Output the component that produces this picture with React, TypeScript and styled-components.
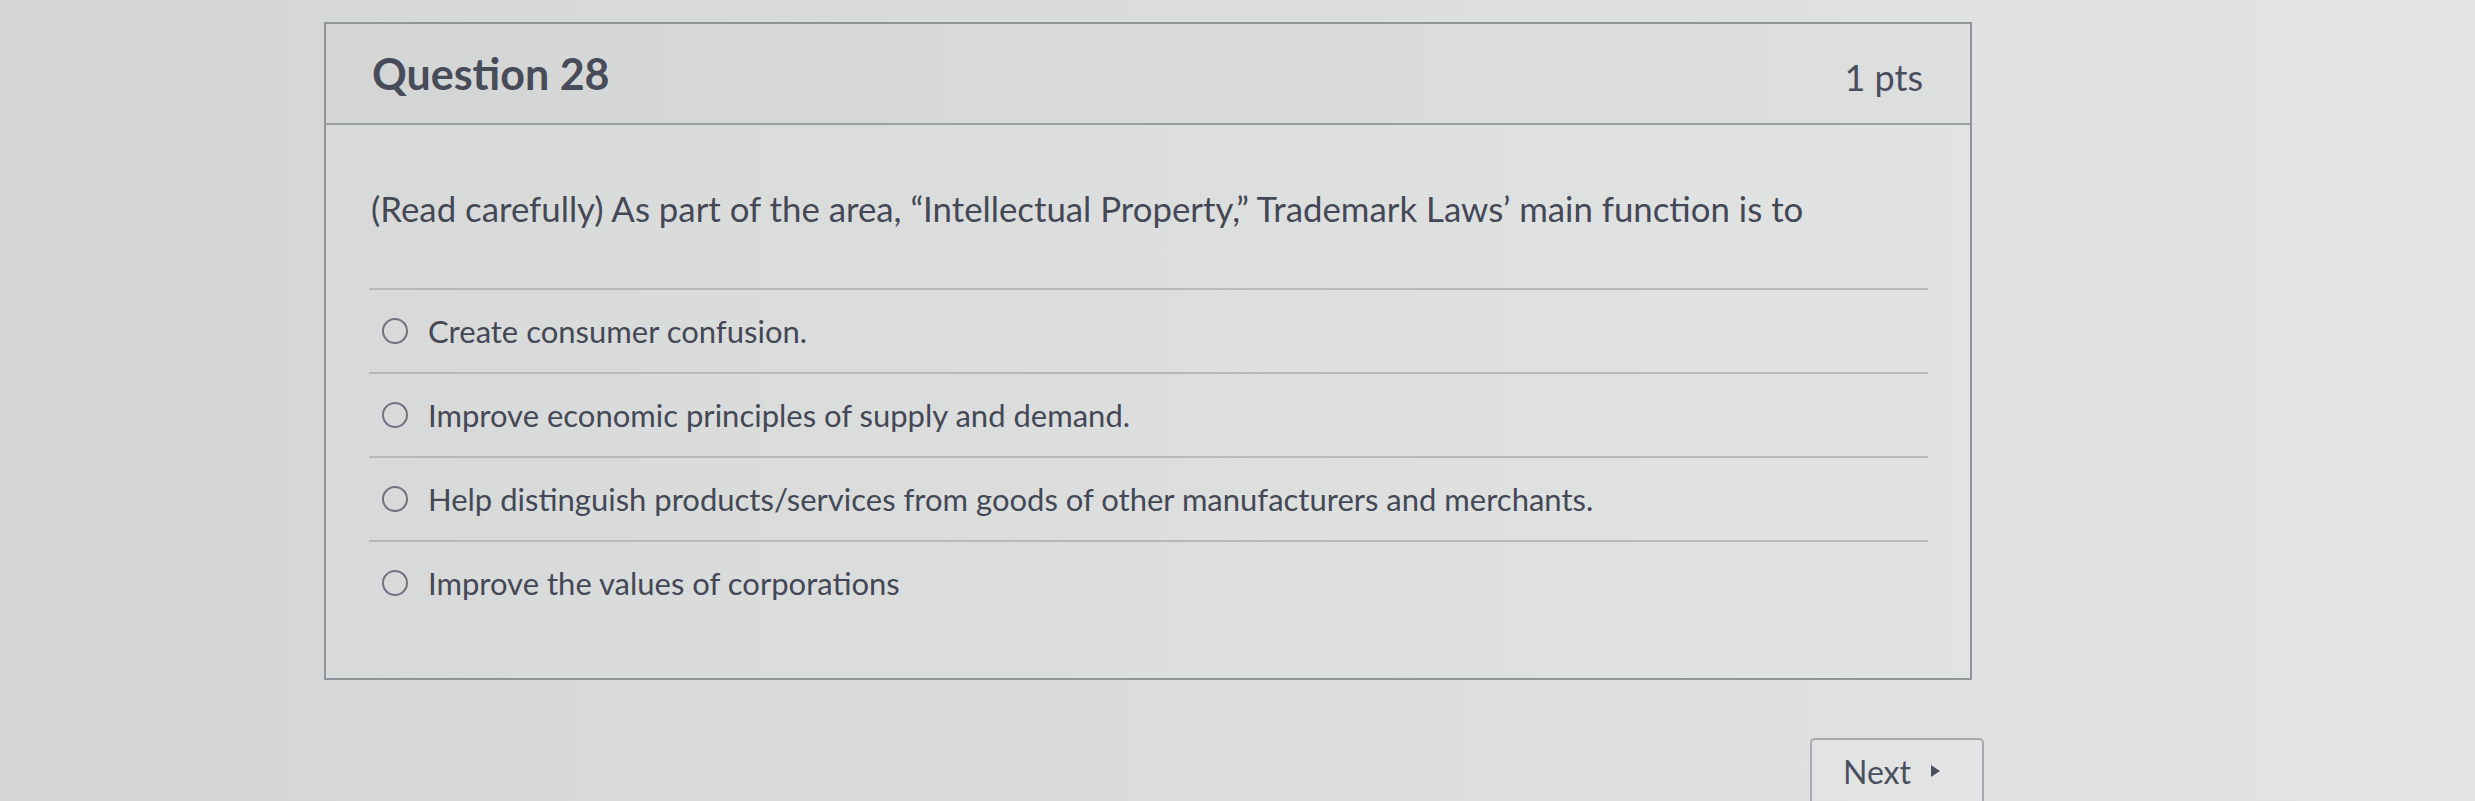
import React from 'react'
import styled, { createGlobalStyle } from 'styled-components'

const GlobalStyle = createGlobalStyle`
  html, body {
    margin: 0;
    padding: 0;
  }
  body {
    width: 2475px;
    height: 801px;
    overflow: hidden;
    background: linear-gradient(90deg, #d3d6d5 0%, #dadcdb 45%, #e3e5e4 100%);
    font-family: Lato, 'Open Sans', sans-serif;
    color: #444856;
  }
`

const Page = styled.div`
  padding: 22px 0 0 324px;
  width: 1648px;
`

const Card = styled.div`
  border: 2px solid #90959b;
  background: rgba(255, 255, 255, 0.07);
`

const Header = styled.div`
  height: 99px;
  padding: 0 47px 0 46px;
  display: flex;
  align-items: center;
  justify-content: space-between;
  border-bottom: 2px solid #999ea3;
  background: rgba(0, 0, 0, 0.015);
`

const Title = styled.h2`
  margin: 0;
  font-size: 43px;
  font-weight: 700;
  color: #484c59;
`

const Points = styled.span`
  font-size: 36px;
  padding-top: 6px;
  color: #4b4f5d;
`

const Body = styled.div`
  padding: 60px 42px 54px 43px;
`

const Prompt = styled.p`
  margin: 0 0 55px;
  font-size: 34.8px;
  line-height: 48px;
  padding-left: 2px;
`

const Answers = styled.div`
  display: flex;
  flex-direction: column;
`

const AnswerRow = styled.label`
  display: flex;
  align-items: center;
  gap: 20px;
  height: 82px;
  padding-left: 13px;
  border-top: 2px solid #b6babc;
  font-size: 31px;
`

const Radio = styled.span`
  width: 22px;
  height: 22px;
  flex: none;
  border: 2px solid #6f7380;
  border-radius: 50%;
`

const Footer = styled.div`
  display: flex;
  justify-content: flex-end;
  margin-top: 58px;
`

const NextButton = styled.button`
  display: flex;
  align-items: center;
  gap: 20px;
  width: 174px;
  height: 90px;
  padding: 0 0 24px 31px;
  margin-right: -12px;
  border: 2px solid #a6aaae;
  border-radius: 5px;
  background: rgba(255, 255, 255, 0.1);
  font-family: Lato, sans-serif;
  font-size: 32px;
  color: #4a4f5e;
`

const Caret = styled.span`
  width: 0;
  height: 0;
  border-top: 6px solid transparent;
  border-bottom: 6px solid transparent;
  border-left: 9px solid #4a4f5e;
`

const answers = [
  'Create consumer confusion.',
  'Improve economic principles of supply and demand.',
  'Help distinguish products/services from goods of other manufacturers and merchants.',
  'Improve the values of corporations',
]

const App = () => {
  return (
    <>
      <GlobalStyle />
      <Page>
        <Card>
          <Header>
            <Title>Question 28</Title>
            <Points>1 pts</Points>
          </Header>
          <Body>
            <Prompt>
              (Read carefully) As part of the area, “Intellectual Property,” Trademark Laws’ main function is to
            </Prompt>
            <Answers>
              {answers.map(answer => (
                <AnswerRow key={answer}>
                  <Radio />
                  {answer}
                </AnswerRow>
              ))}
            </Answers>
          </Body>
        </Card>
        <Footer>
          <NextButton>
            Next
            <Caret />
          </NextButton>
        </Footer>
      </Page>
    </>
  )
}

export default App
